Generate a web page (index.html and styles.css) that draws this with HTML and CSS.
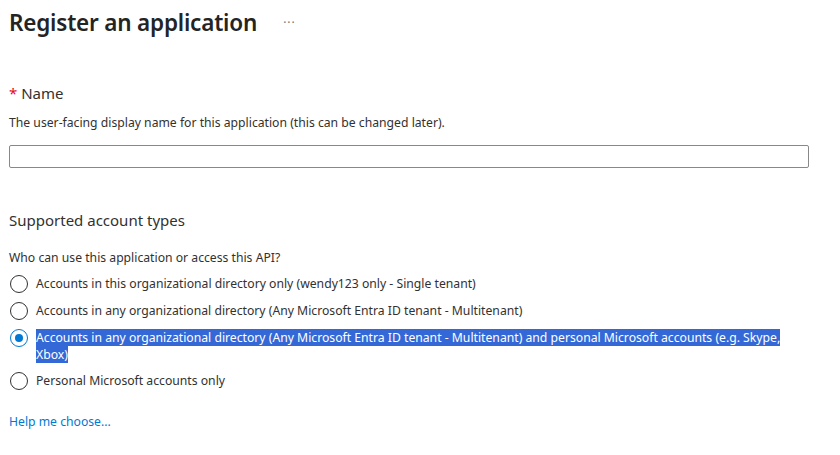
FILE: index.html
```html
<!DOCTYPE html>
<html>
<head>
<meta charset="utf-8">
<link rel="stylesheet" href="styles.css">
</head>
<body>
<div class="page">
  <div class="header">
    <h1 class="title">Register an application</h1>
    <span class="more">···</span>
  </div>

  <div class="field">
    <div class="label"><span class="req">*</span> Name</div>
    <div class="desc">The user-facing display name for this application (this can be changed later).</div>
    <input class="textbox" type="text">
  </div>

  <div class="section">
    <div class="label">Supported account types</div>
    <div class="desc q">Who can use this application or access this API?</div>
    <div class="options">
      <label class="opt"><span class="radio"></span><span class="otext">Accounts in this organizational directory only (wendy123 only - Single tenant)</span></label>
      <label class="opt"><span class="radio"></span><span class="otext">Accounts in any organizational directory (Any Microsoft Entra ID tenant - Multitenant)</span></label>
      <label class="opt"><span class="radio on"></span><span class="otext"><span class="sel">Accounts in any organizational directory (Any Microsoft Entra ID tenant - Multitenant) and personal Microsoft accounts (e.g. Skype, Xbox)</span></span></label>
      <label class="opt"><span class="radio"></span><span class="otext">Personal Microsoft accounts only</span></label>
    </div>
    <a class="help" href="#">Help me choose...</a>
  </div>
</div>
</body>
</html>
```

FILE: styles.css
```css
html, body {
  margin: 0;
  padding: 0;
  background: #ffffff;
}
body {
  font-family: "Noto Sans", "Open Sans", sans-serif;
  color: #201f1e;
}
.page {
  width: 800px;
  padding: 0 0 0 9px;
}
.header {
  display: flex;
  align-items: center;
  height: 44px;
}
.title {
  margin: 0;
  font-size: 22.5px;
  font-weight: 600;
  letter-spacing: -0.2px;
  color: #242424;
}
.more {
  margin-left: 26px;
  font-size: 12px;
  color: #797775;
  letter-spacing: 1px;
}
.field {
  margin-top: 39px;
}
.label {
  font-size: 15px;
  line-height: 20px;
  color: #323130;
}
.req {
  color: #e00b1c;
}
.desc {
  font-size: 12.2px;
  line-height: 16px;
  margin-top: 12px;
  color: #323130;
}
.textbox {
  display: block;
  box-sizing: border-box;
  width: 800px;
  height: 23px;
  margin: 14px 0 0 0;
  border: 1px solid #8a8886;
  border-radius: 2px;
  padding: 0;
  outline: none;
}
.section {
  margin-top: 42px;
}
.q {
  margin-top: 20px;
}
.options {
  display: flex;
  flex-direction: column;
  margin-top: 6px;
}
.opt {
  display: flex;
  align-items: flex-start;
  font-size: 12.2px;
  line-height: 17px;
  padding: 3px 0 6px 0;
  color: #323130;
}
.radio {
  flex: none;
  box-sizing: border-box;
  width: 18px;
  height: 18px;
  border: 1px solid #323130;
  border-radius: 50%;
  margin: 0 8px 0 1px;
  position: relative;
}
.radio.on {
  border-color: #0078d4;
}
.radio.on::after {
  content: "";
  position: absolute;
  left: 4px;
  top: 4px;
  width: 8px;
  height: 8px;
  border-radius: 50%;
  background: #0078d4;
}
.otext {
  width: 760px;
}
.sel {
  background: #3468d6;
  color: #ffffff;
}
.help {
  display: inline-block;
  margin-top: 17px;
  font-size: 12.2px;
  color: #0078d4;
  text-decoration: none;
}
```
